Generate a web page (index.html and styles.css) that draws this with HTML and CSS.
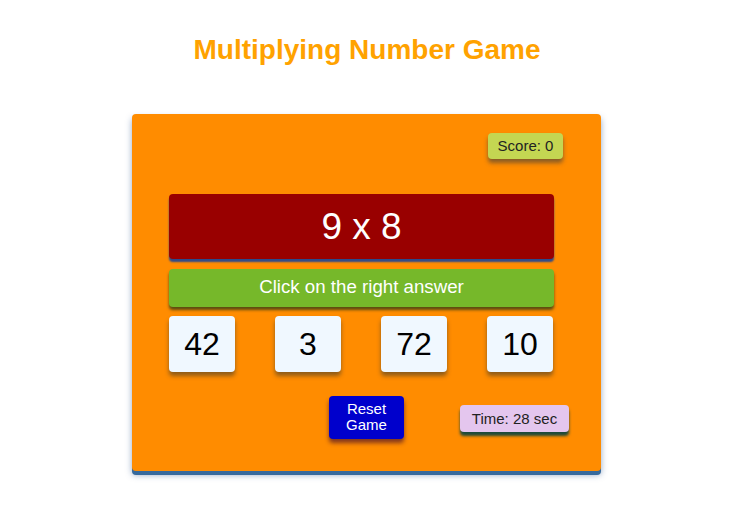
FILE: index.html
```html
<!DOCTYPE html>
<html>
<head>
<meta charset="utf-8">
<link rel="stylesheet" href="styles.css">
</head>
<body>
<h1 class="title">Multiplying Number Game</h1>
<div class="container">
  <div class="top-row">
    <div class="score">Score: 0</div>
  </div>
  <div class="question">9 x 8</div>
  <div class="instruction">Click on the right answer</div>
  <div class="choices">
    <div class="box">42</div>
    <div class="box">3</div>
    <div class="box">72</div>
    <div class="box">10</div>
  </div>
  <div class="bottom-row">
    <div class="reset">Reset<br>Game</div>
    <div class="time">Time: 28 sec</div>
  </div>
</div>
</body>
</html>
```
FILE: styles.css
```css
html, body {
  margin: 0;
  padding: 0;
  background: #ffffff;
  font-family: "Liberation Sans", Arial, sans-serif;
}
body {
  padding-bottom: 40px;
}
.title {
  margin: 0;
  padding-top: 34px;
  height: 114px;
  box-sizing: border-box;
  text-align: center;
  color: #ffa200;
  font-size: 28px;
  font-weight: bold;
  line-height: 32px;
  width: 734px;
}
.container {
  margin-left: 132px;
  width: 469px;
  height: 357px;
  box-sizing: border-box;
  background: #ff8c00;
  border-radius: 4px;
  box-shadow: 0 4px 0 #36699c, 0 4px 6px rgba(40, 80, 140, 0.5);
  padding: 19px 37px 0 37px;
  display: flex;
  flex-direction: column;
}
.top-row {
  display: flex;
  justify-content: flex-end;
  padding-right: 1px;
  height: 26px;
}
.score {
  width: 75px;
  height: 26px;
  box-sizing: border-box;
  background: #c4d652;
  border-radius: 4px;
  box-shadow: 0 4px 4px rgba(60, 60, 60, 0.6);
  font-size: 15px;
  line-height: 26px;
  text-align: center;
  color: #222;
}
.question {
  margin-top: 35px;
  width: 385px;
  height: 65px;
  background: #990000;
  border-radius: 4px;
  box-shadow: 0 3px 2px #2b4a8c;
  color: #ffffff;
  font-size: 37px;
  line-height: 65px;
  text-align: center;
}
.instruction {
  margin-top: 10px;
  width: 385px;
  height: 38px;
  background: #76b82a;
  border-radius: 4px;
  box-shadow: 0 3px 3px rgba(50, 60, 20, 0.8);
  color: #ffffff;
  font-size: 18.7px;
  line-height: 36px;
  text-align: center;
}
.choices {
  margin-top: 9px;
  display: flex;
  gap: 40px;
  width: 385px;
}
.box {
  width: 66px;
  height: 56px;
  background: #f0f8ff;
  border-radius: 4px;
  box-shadow: 0 4px 4px rgba(70, 60, 40, 0.6);
  color: #000;
  font-size: 32px;
  line-height: 56px;
  text-align: center;
}
.bottom-row {
  margin-top: 24px;
  display: flex;
  align-items: flex-start;
  padding-left: 160px;
}
.reset {
  width: 75px;
  height: 43px;
  flex-shrink: 0;
  box-sizing: border-box;
  background: #0000cc;
  border-radius: 4px;
  box-shadow: 0 4px 4px rgba(80, 20, 40, 0.7);
  color: #ffffff;
  font-size: 15px;
  line-height: 16px;
  padding-top: 5px;
  text-align: center;
}
.time {
  margin-left: 56px;
  margin-top: 9px;
  width: 109px;
  height: 27px;
  flex-shrink: 0;
  background: #e4c6ee;
  border-radius: 4px;
  box-shadow: 0 4px 3px #1d4a3a;
  color: #222;
  font-size: 15px;
  line-height: 27px;
  text-align: center;
}
```
